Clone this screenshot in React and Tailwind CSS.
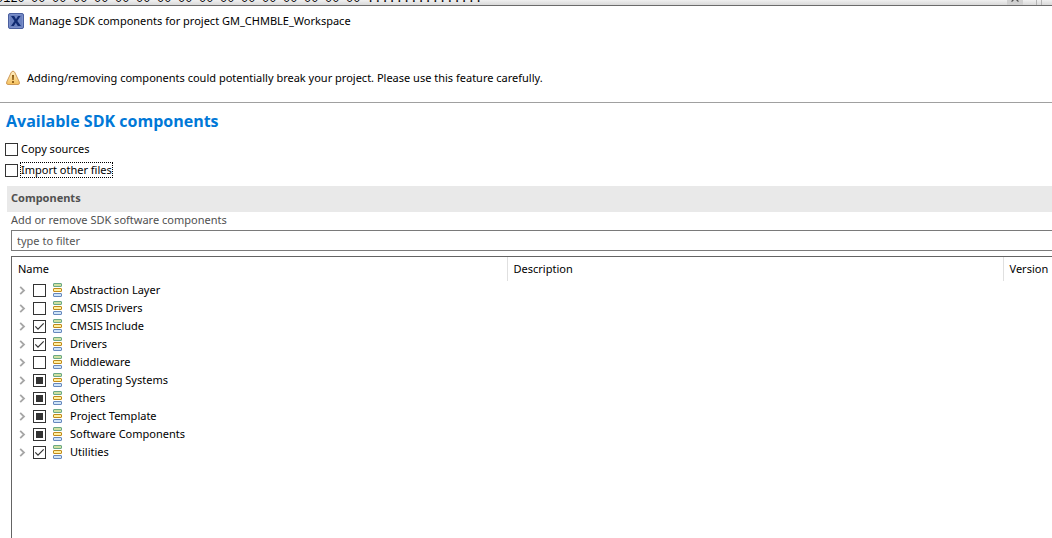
import { useEffect, useRef } from "react";

const rows = [
  ["Abstraction Layer", "off"],
  ["CMSIS Drivers", "off"],
  ["CMSIS Include", "on"],
  ["Drivers", "on"],
  ["Middleware", "off"],
  ["Operating Systems", "mixed"],
  ["Others", "mixed"],
  ["Project Template", "mixed"],
  ["Software Components", "mixed"],
  ["Utilities", "on"],
];

const bytes = Array.from({ length: 16 }, () => "00");

function Check({ id, state = "off", label }) {
  const ref = useRef(null);
  useEffect(() => {
    ref.current.indeterminate = state === "mixed";
  }, [state]);
  return (
    <span className="grid size-[13px] shrink-0">
      <input
        ref={ref}
        id={id}
        type="checkbox"
        aria-label={label}
        defaultChecked={state === "on"}
        className="peer col-start-1 row-start-1 size-[13px] appearance-none border border-[#333] bg-white outline-none"
      />
      <svg
        viewBox="0 0 13 13"
        className="pointer-events-none col-start-1 row-start-1 hidden size-[13px] peer-checked:block"
        aria-hidden="true"
      >
        <path d="M2.3 6.3 5 9.2 10.7 3.3" fill="none" stroke="#333" strokeWidth="1.2" />
      </svg>
      <svg
        viewBox="0 0 13 13"
        className="pointer-events-none col-start-1 row-start-1 hidden size-[13px] peer-indeterminate:block"
        aria-hidden="true"
      >
        <rect x="3" y="3" width="7" height="7" fill="#333" />
      </svg>
    </span>
  );
}

function AppIcon() {
  return (
    <svg viewBox="0 0 16 16" className="size-4 shrink-0" aria-hidden="true">
      <rect x="0.5" y="0.5" width="15" height="15" rx="1.5" fill="#6a80be" stroke="#4a5f9f" />
      <rect x="1.5" y="1.5" width="13" height="13" rx="1" fill="none" stroke="#7b90ca" />
      <path d="M3 3h3.2L8 6.2 10 3h2.6L9.3 7.9 13 13H9.8L7.8 9.8 5.8 13H3L6.5 8Z" fill="#102a72" />
    </svg>
  );
}

function WarningIcon() {
  return (
    <svg viewBox="0 0 16 16" className="size-4 shrink-0" aria-hidden="true">
      <defs>
        <linearGradient id="warn" x1="0" y1="0" x2="0" y2="1">
          <stop offset="0" stopColor="#fff0c8" />
          <stop offset="1" stopColor="#f5c15c" />
        </linearGradient>
      </defs>
      <path
        d="M6.3 2.2Q8 -.2 9.7 2.2L14.3 12Q15 14.5 13 14.5H3Q1 14.5 1.7 12Z"
        fill="url(#warn)"
        stroke="#cf9a58"
      />
      <path d="M7 5h2l-.3 5H7.3ZM7.1 11h1.8v2H7.1Z" fill="#8a5a13" />
    </svg>
  );
}

function StackIcon() {
  return (
    <svg viewBox="0 0 9 14" className="h-[14px] w-[9px] shrink-0" aria-hidden="true">
      <rect x="0.5" y="0.5" width="8" height="3" rx="0.5" fill="#cfe0a0" stroke="#6aa886" />
      <rect x="0.5" y="5.5" width="8" height="3" rx="0.5" fill="#fff0a0" stroke="#c08a1c" />
      <rect x="0.5" y="10.5" width="8" height="3" rx="0.5" fill="#cfe4f7" stroke="#6688bd" />
    </svg>
  );
}

export default function App() {
  return (
    <div className="min-h-screen overflow-hidden bg-white font-['Noto_Sans','Open_Sans',sans-serif] text-[11px] leading-4 text-black">
      <div className="flex h-[6px] justify-between overflow-hidden border-b border-[#6b6b6b] bg-linear-to-b from-[#f0f0f0] to-[#d9d9d9]">
        <div className="-mt-[7px] -ml-[4px] flex font-['Liberation_Mono',monospace] text-[12px] leading-[12px]">
          <span className="w-[35px]">0120</span>
          {bytes.map((b, i) => (
            <span key={i} className="w-[21px]">{b}</span>
          ))}
          <span>................</span>
        </div>
        <div className="flex">
          <div className="flex w-4 justify-center bg-[#d0d0d0]">
            <svg viewBox="0 0 8 3" className="h-[3px] w-2" aria-hidden="true">
              <path d="M1 2V.5h1.500M7 2V.5H5.500" fill="none" stroke="#505050" strokeWidth="1" />
            </svg>
          </div>
          <div className="mr-[10px] ml-[13px] w-[6px] border-x border-[#b4b4b4]" />
        </div>
      </div>
      <header className="border-b border-[#a0a0a0] pb-4">
        <div className="flex items-center gap-[5px] pt-[6px] pl-2">
          <AppIcon />
          <h1 className="pt-px">Manage SDK components for project GM_CHMBLE_Workspace</h1>
        </div>
        <div className="flex items-center gap-[6px] pt-[41px] pl-[5px]">
          <WarningIcon />
          <p>Adding/removing components could potentially break your project. Please use this feature carefully.</p>
        </div>
      </header>
      <main>
        <h2 className="pt-[7px] pl-[6px] font-['Open_Sans',sans-serif] text-[16px] leading-[22px] font-bold text-[#0078d7]">
          Available SDK components
        </h2>
        <div className="flex flex-col gap-[6px] pt-[9px] pl-[5px]">
          <div className="flex items-center gap-[3px]">
            <Check id="copy" />
            <label htmlFor="copy">Copy sources</label>
          </div>
          <div className="flex items-center gap-[3px]">
            <Check id="import" />
            <label htmlFor="import" className="h-[14px] leading-[14px] outline outline-dotted outline-black">
              Import other files
            </label>
          </div>
        </div>
        <section className="pt-[9px] pl-[7px]">
          <h3 className="bg-[#e9e9e9] pt-1 pb-[6px] pl-1 font-bold text-[#505050]">Components</h3>
          <p className="pl-1 text-[#505050]">Add or remove SDK software components</p>
        </section>
        <div className="pl-[11px]">
          <input
            type="text"
            aria-label="Filter"
            placeholder="type to filter"
            className="mt-[2px] block h-[21px] w-full border border-r-0 border-[#7a7a7a] px-[5px] outline-none placeholder:text-[#555]"
          />
          <div className="mt-[5px] min-h-[300px] border-t border-l border-[#646464]">
            <table className="w-full table-fixed border-collapse text-left">
              <colgroup>
                <col className="w-[495px]" />
                <col className="w-[496px]" />
                <col />
              </colgroup>
              <thead>
                <tr className="h-6">
                  <th className="border-r border-[#e0e0e0] pl-[6px] font-normal">Name</th>
                  <th className="border-r border-[#e0e0e0] pl-[6px] font-normal">Description</th>
                  <th className="pl-[6px] font-normal">Version</th>
                </tr>
              </thead>
              <tbody>
                {rows.map(([name, state]) => (
                  <tr key={name}>
                    <td className="p-0">
                      <div className="flex h-[18px] items-center pl-[7px]">
                        <button type="button" aria-label={"Expand " + name} className="mr-[7px]">
                          <svg viewBox="0 0 7 9" className="h-[9px] w-[7px]" aria-hidden="true">
                            <path d="M1.2.8 5 4.5 1.2 8.2" fill="none" stroke="#a6a6a6" strokeWidth="1.8" />
                          </svg>
                        </button>
                        <Check label={name} state={state} />
                        <span className="mr-2 ml-[7px]"><StackIcon /></span>
                        <span>{name}</span>
                      </div>
                    </td>
                    <td />
                    <td />
                  </tr>
                ))}
              </tbody>
            </table>
          </div>
        </div>
      </main>
    </div>
  );
}
